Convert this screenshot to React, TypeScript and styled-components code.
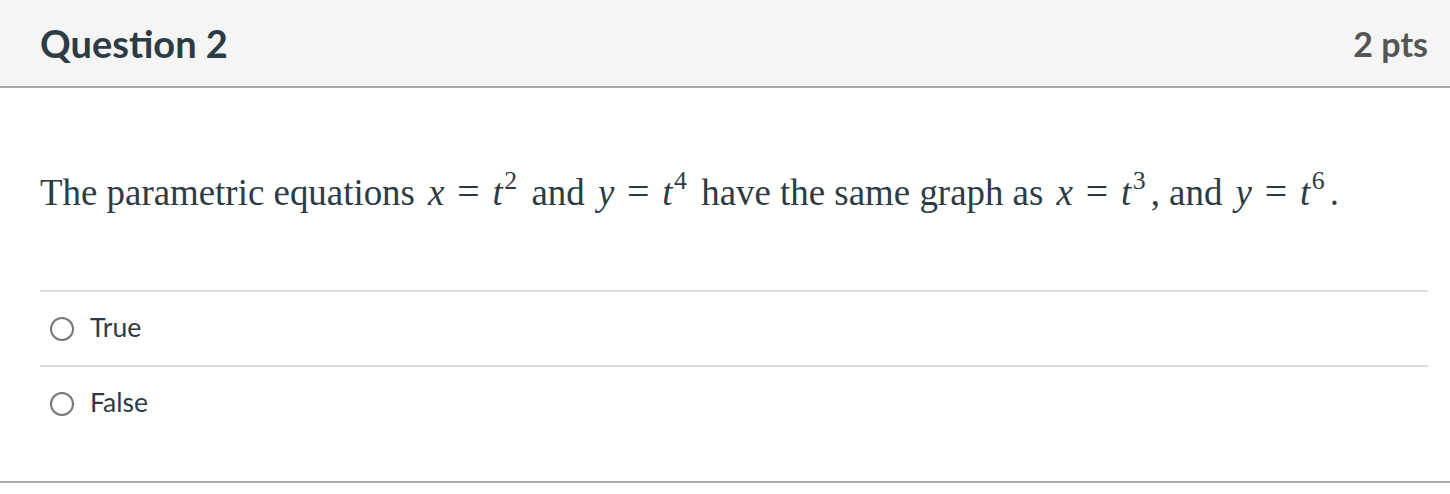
import React from "react";
import styled, { createGlobalStyle } from "styled-components";

const Global = createGlobalStyle`
  html, body { margin: 0; padding: 0; background: #fff; }
  body { font-family: Lato, "Open Sans", sans-serif; color: #2d3b45; }
`;

const Card = styled.div`
  width: 1450px;
  border-bottom: 2px solid #aaaaaa;
  background: #fff;
`;

const Header = styled.div`
  height: 86px;
  background: #f5f5f5;
  border-bottom: 2px solid #aaaaaa;
  display: flex;
  align-items: center;
  justify-content: space-between;
  padding: 0 22px 0 40px;
`;

const Title = styled.h2`
  margin: 0;
  font-family: Lato, sans-serif;
  font-weight: 700;
  font-size: 38px;
  color: #2d3b45;
`;

const Points = styled.div`
  font-family: Lato, sans-serif;
  font-weight: 700;
  font-size: 34px;
  color: #555555;
`;

const Body = styled.div`
  padding: 0 22px 41px 40px;
`;

const Prompt = styled.p`
  margin: 0;
  padding: 85px 0 77px;
  font-family: "Liberation Serif", "Times New Roman", serif;
  font-size: 36.9px;
  line-height: 40px;
  color: #2d3b45;
`;

const Math = styled.span`
  padding: 0 4px 0 4px;
  white-space: nowrap;
`;

const MathVar = styled.i`
  font-family: "Liberation Serif", "Times New Roman", serif;
  font-style: italic;
`;

const Eq = styled.span`
  padding: 0 0.32em;
  font-size: 1.08em;
  line-height: 0;
`;

const Sup = styled.sup`
  font-size: 0.7em;
  vertical-align: 0.62em;
  line-height: 0;
  margin-left: 0.06em;
  margin-right: 1px;
`;

const AnswerRow = styled.label`
  display: flex;
  align-items: center;
  gap: 16px;
  height: 73px;
  padding-left: 10px;
  border-top: 2px solid #dddddd;
  box-sizing: content-box;
`;

const Radio = styled.span`
  width: 20px;
  height: 20px;
  border: 2px solid #777777;
  border-radius: 50%;
  background: #fff;
  flex: none;
`;

const AnswerText = styled.span`
  font-family: Lato, sans-serif;
  font-size: 26.5px;
  color: #2d3b45;
  margin-top: -3px;
`;

const Equation = ({ v, p }: { v: string; p: string }) => (
  <Math>
    <MathVar>{v}</MathVar>
    <Eq>=</Eq>
    <MathVar>t</MathVar>
    <Sup>{p}</Sup>
  </Math>
);

export default function App() {
  return (
    <>
      <Global />
      <Card>
        <Header>
          <Title>Question 2</Title>
          <Points>2 pts</Points>
        </Header>
        <Body>
          <Prompt>
            The parametric equations <Equation v="x" p="2" /> and{" "}
            <Equation v="y" p="4" /> have the same graph as{" "}
            <Equation v="x" p="3" />, and <Equation v="y" p="6" />.
          </Prompt>
          <AnswerRow>
            <Radio />
            <AnswerText>True</AnswerText>
          </AnswerRow>
          <AnswerRow>
            <Radio />
            <AnswerText>False</AnswerText>
          </AnswerRow>
        </Body>
      </Card>
    </>
  );
}
